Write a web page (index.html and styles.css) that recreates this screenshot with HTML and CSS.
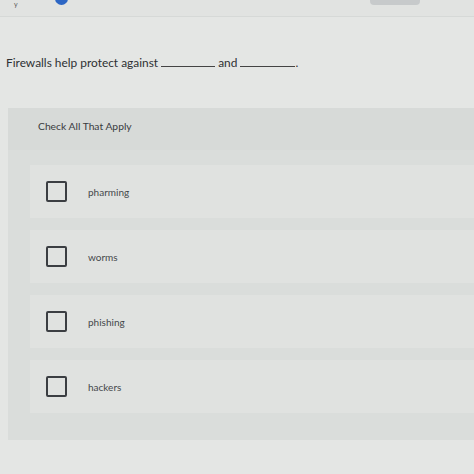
FILE: index.html
```html
<!DOCTYPE html>
<html>
<head>
<meta charset="utf-8">
<link rel="stylesheet" href="styles.css">
</head>
<body>
<div class="topbar">
  <span class="crumb">y</span>
  <span class="dot"></span>
  <span class="spacer"></span>
  <span class="btn"></span>
</div>
<div class="question">Firewalls help protect against <span class="blank"></span> and <span class="blank blank2"></span>.</div>
<div class="panel">
  <div class="panel-head">Check All That Apply</div>
  <div class="options">
    <div class="option"><span class="box"></span><span class="label">pharming</span></div>
    <div class="option"><span class="box"></span><span class="label">worms</span></div>
    <div class="option"><span class="box"></span><span class="label">phishing</span></div>
    <div class="option"><span class="box"></span><span class="label">hackers</span></div>
  </div>
</div>
</body>
</html>
```

FILE: styles.css
```css
html, body {
  margin: 0;
  padding: 0;
  background: #e4e6e4;
  font-family: Lato, "Open Sans", sans-serif;
  overflow: hidden;
}
.topbar {
  height: 16px;
  background: #e1e3e1;
  border-bottom: 1px solid #d6d9d7;
  display: flex;
  align-items: flex-start;
  position: relative;
}
.crumb {
  font-size: 7px;
  line-height: 7px;
  color: #555;
  margin-left: 14px;
  margin-top: 1px;
}
.dot {
  width: 13px;
  height: 13px;
  border-radius: 50%;
  background: #2c66c4;
  margin-left: 37px;
  margin-top: -8px;
}
.spacer { flex: 1; }
.btn {
  width: 50px;
  height: 5px;
  background: #c7cacb;
  border-radius: 0 0 4px 4px;
  margin-right: 54px;
}
.question {
  margin: 38px 0 0 6px;
  font-size: 11.9px;
  color: #2e3033;
  line-height: 16px;
}
.blank {
  display: inline-block;
  width: 54px;
  border-bottom: 1px solid #444;
  vertical-align: baseline;
}
.blank2 { width: 55px; }
.panel {
  margin: 37px 0 0 8px;
  background: #dadddb;
  height: 332px;
}
.panel-head {
  height: 42px;
  box-sizing: border-box;
  padding: 12px 0 0 30px;
  font-size: 10.3px;
  color: #3a3c3f;
  background: #d7dad8;
}
.options {
  display: flex;
  flex-direction: column;
  gap: 12px;
  padding: 15px 0 0 22px;
}
.option {
  height: 53px;
  background: #e0e2e0;
  display: flex;
  align-items: center;
  padding-left: 16px;
}
.box {
  width: 17px;
  height: 17px;
  border: 2px solid #3b3e42;
  border-radius: 2px;
  flex: none;
}
.label {
  margin-left: 21px;
  font-size: 10px;
  color: #45484b;
}
```
